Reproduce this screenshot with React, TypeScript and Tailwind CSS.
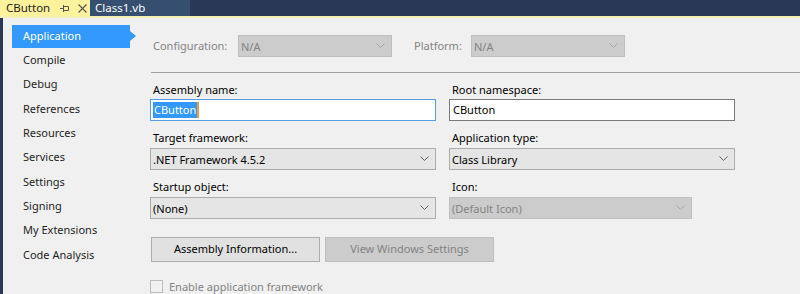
import React from "react";

const font = { fontFamily: '"Noto Sans", "Open Sans", sans-serif' };

function Chevron({ color }: { color: string }) {
  return (
    <svg width="9" height="6" viewBox="0 0 9 6" className="shrink-0">
      <path d="M0.5 0.5 L4.5 4.5 L8.5 0.5" fill="none" stroke={color} strokeWidth="1" />
    </svg>
  );
}

function Select({
  value,
  disabled,
  className,
}: {
  value: string;
  disabled?: boolean;
  className: string;
}) {
  return (
    <div
      className={
        "h-[22px] flex items-center justify-between border pl-[2px] pr-[6px] " +
        (disabled
          ? "bg-[#cccccc] border-[#bfbfbf] text-[#838383] "
          : "bg-[#e5e5e5] border-[#acacac] text-[#000000] ") +
        className
      }
    >
      <span className="leading-none">{value}</span>
      <Chevron color={disabled ? "#a6a6a6" : "#606060"} />
    </div>
  );
}

const navItems = [
  "Application",
  "Compile",
  "Debug",
  "References",
  "Resources",
  "Services",
  "Settings",
  "Signing",
  "My Extensions",
  "Code Analysis",
];

export default function App() {
  return (
    <div
      className="w-[800px] h-[294px] bg-[#293955] flex flex-col overflow-hidden text-[11px]"
      style={font}
    >
      {/* Tab bar */}
      <div className="h-[16px] flex shrink-0">
        <div className="w-[90px] bg-[#fff29d] flex items-center text-[#1e1e1e]">
          <span className="pl-[6px] text-[11.5px] leading-none">CButton</span>
          <svg width="10" height="9" viewBox="0 0 10 9" className="ml-[10px]">
            <path d="M0 4.5 H3" stroke="#555" strokeWidth="1" />
            <path d="M3.5 1 V8" stroke="#555" strokeWidth="1" />
            <path d="M3.5 2.5 H8.5 V6.5 H3.5" fill="none" stroke="#555" strokeWidth="1" />
          </svg>
          <svg width="9" height="9" viewBox="0 0 9 9" className="ml-[8px]">
            <path d="M0.5 0.5 L8.5 8.5 M8.5 0.5 L0.5 8.5" stroke="#555" strokeWidth="1.1" />
          </svg>
        </div>
        <div className="w-[100px] bg-[#364e6f] flex items-center text-white">
          <span className="pl-[5px] text-[11.5px] leading-none">Class1.vb</span>
        </div>
      </div>
      <div className="h-[2px] bg-[#f5efb3] shrink-0" />

      {/* Body */}
      <div className="flex-1 flex pl-[3px]">
        <div className="flex-1 bg-[#f0f0f0] flex">
          {/* Nav */}
          <div className="w-[147px] shrink-0 pt-[6px] flex flex-col text-[11px]">
            {navItems.map((item, i) =>
              i === 0 ? (
                <div key={item} className="h-[24.3px] flex items-center pl-[9px]">
                  <div className="w-[118px] h-[23px] bg-[#3399ff] text-white flex items-center pl-[11px]">
                    {item}
                  </div>
                  <div className="w-0 h-0 border-l-[6px] border-l-[#3399ff] border-y-[5px] border-y-transparent" />
                </div>
              ) : (
                <div
                  key={item}
                  className="h-[24.3px] flex items-center pl-[20px] text-[#1e1e1e]"
                >
                  {item}
                </div>
              )
            )}
          </div>

          {/* Main */}
          <div className="flex-1 flex flex-col pt-[17px] text-[11px]">
            <div className="h-[22px] flex items-center">
              <span className="w-[88px] pl-[3px] text-[#838383]">Configuration:</span>
              <Select value="N/A" disabled className="w-[154px]" />
              <span className="w-[79px] pl-[22px] text-[#838383]">Platform:</span>
              <Select value="N/A" disabled className="w-[154px]" />
            </div>

            <div className="mt-[15px] h-px bg-[#a0a0a0] ml-[1px]" />

            <div className="grid grid-cols-[286px_286px] gap-x-[13px] mt-[9px]">
              {/* Assembly name */}
              <div className="flex flex-col">
                <span className="h-[16px] leading-[16px] pl-[3px] text-black">Assembly name:</span>
                <div className="mt-[1px] h-[22px] bg-white border border-[#569de5] flex items-center pl-[2px]">
                  <span className="bg-[#3399ff] text-white leading-[16px] px-px">CButton</span>
                  <span className="w-[2px] h-[16px] bg-[#f0a030]" />
                </div>
              </div>
              <div className="flex flex-col">
                <span className="h-[16px] leading-[16px] pl-[3px] text-black">Root namespace:</span>
                <div className="mt-[1px] h-[22px] bg-white border border-[#7a7a7a] flex items-center pl-[3px] text-black">
                  CButton
                </div>
              </div>

              {/* Target framework */}
              <div className="flex flex-col mt-[9px]">
                <span className="h-[16px] leading-[16px] pl-[3px] text-black">Target framework:</span>
                <Select value=".NET Framework 4.5.2" className="mt-[2px] w-[286px]" />
              </div>
              <div className="flex flex-col mt-[9px]">
                <span className="h-[16px] leading-[16px] pl-[3px] text-black">Application type:</span>
                <Select value="Class Library" className="mt-[2px] w-[286px]" />
              </div>

              {/* Startup object */}
              <div className="flex flex-col mt-[9px]">
                <span className="h-[16px] leading-[16px] pl-[3px] text-black">Startup object:</span>
                <Select value="(None)" className="mt-[2px] w-[286px]" />
              </div>
              <div className="flex flex-col mt-[9px]">
                <span className="h-[16px] leading-[16px] pl-[3px] text-black">Icon:</span>
                <Select value="(Default Icon)" disabled className="mt-[2px] w-[243px]" />
              </div>
            </div>

            <div className="mt-[18px] flex gap-[5px] pl-[1px]">
              <div className="w-[169px] h-[25px] bg-[#e1e1e1] border border-[#adadad] flex items-center justify-center text-black">
                Assembly Information...
              </div>
              <div className="w-[169px] h-[25px] bg-[#cccccc] border border-[#bfbfbf] flex items-center justify-center text-[#838383]">
                View Windows Settings
              </div>
            </div>

            <div className="mt-[18px] flex items-center gap-[6px]">
              <div className="w-[13px] h-[13px] bg-[#f0f0f0] border border-[#bcbcbc]" />
              <span className="text-[#838383] leading-[13px]">Enable application framework</span>
            </div>
          </div>
        </div>
      </div>
    </div>
  );
}
